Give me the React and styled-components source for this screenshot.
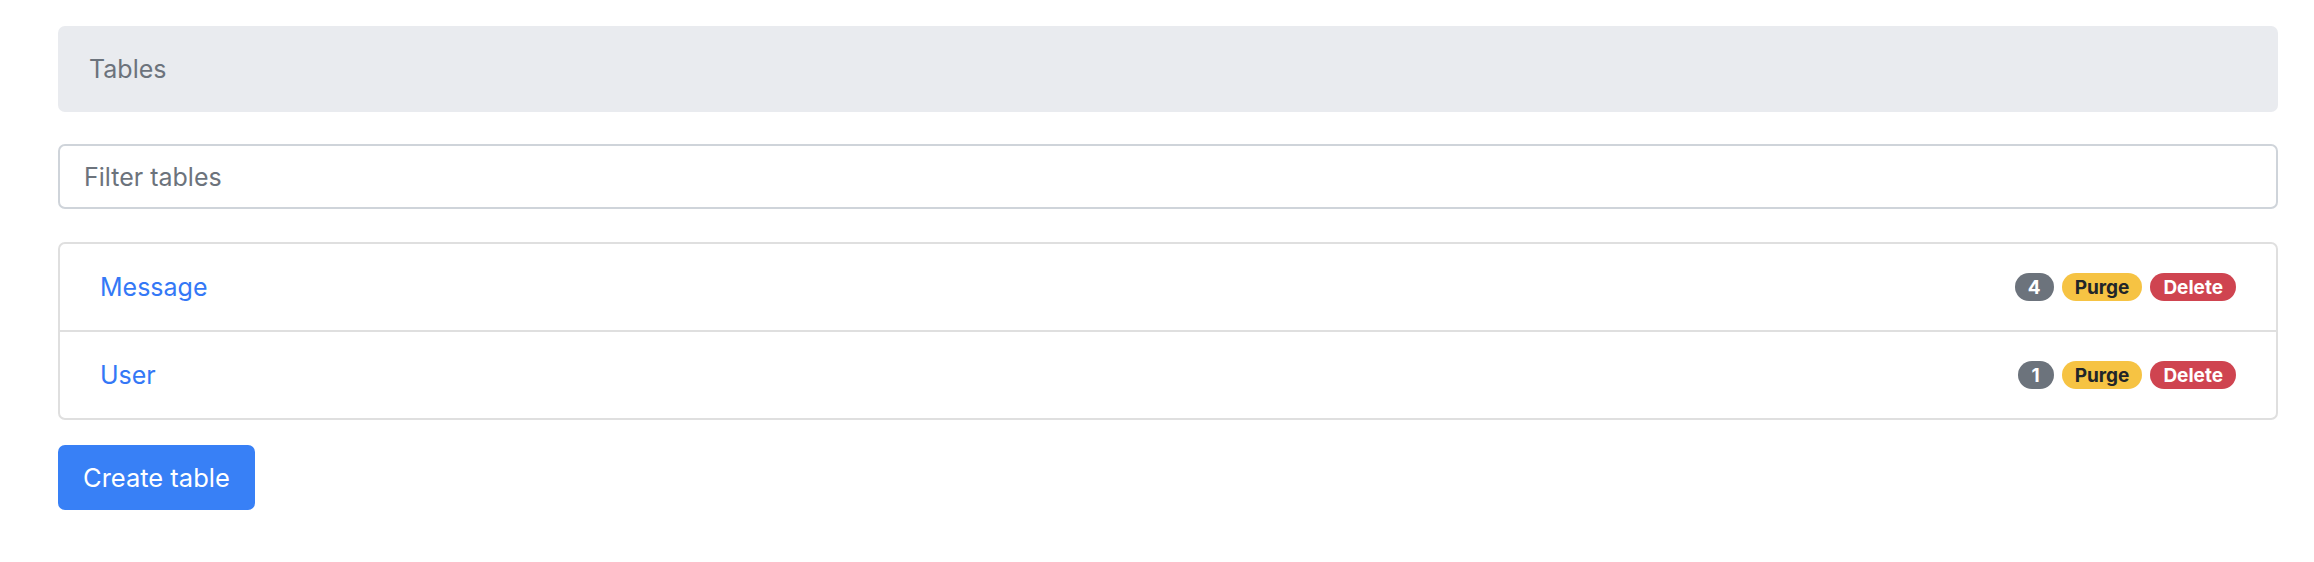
import { createGlobalStyle, styled } from "styled-components"

const GlobalStyle = createGlobalStyle`
    html, body {
        margin:0;
        background:#ffffff;
        font-family:Inter, "Noto Sans", "Liberation Sans", sans-serif;
    }
`

const tables = [
    { name: "Message", count: 4 },
    { name: "User", count: 1 },
]

function App(){
    return (
        <>
            <GlobalStyle />
            <Page>
                <Breadcrumb>Tables</Breadcrumb>
                <FilterInput placeholder="Filter tables" />
                <ListGroup>
                    {tables.map((table) => (
                        <ListItem key={table.name}>
                            <TableLink href="#">{table.name}</TableLink>
                            <Badges>
                                <Badge $variant="count">{table.count}</Badge>
                                <Badge $variant="purge">Purge</Badge>
                                <Badge $variant="delete">Delete</Badge>
                            </Badges>
                        </ListItem>
                    ))}
                </ListGroup>
                <PrimaryButton>Create table</PrimaryButton>
            </Page>
        </>
    )
}

export default App

const badgeColors = {
    count: { bg: "#6c737c", fg: "#ffffff" },
    purge: { bg: "#f6c343", fg: "#212529" },
    delete: { bg: "#cf4450", fg: "#ffffff" },
}

const Page = styled.div`
    padding:26px 36px 40px 58px;
    display:flex;
    flex-direction:column;
    align-items:flex-start;
`
const Breadcrumb = styled.div`
    box-sizing:border-box;
    width:100%;
    height:86px;
    display:flex;
    align-items:center;
    padding:0 31px;
    background:#e9ebef;
    border-radius:7px;
    color:#6c737c;
    font-size:25px;
`
const FilterInput = styled.input`
    box-sizing:border-box;
    width:100%;
    height:65px;
    margin-top:32px;
    padding:0 24px;
    border:2px solid #cfd4da;
    border-radius:7px;
    font-family:inherit;
    font-size:25px;
    color:#495057;
    outline:none;
    &::placeholder{
        color:#6c737c;
    }
`
const ListGroup = styled.div`
    box-sizing:border-box;
    width:100%;
    margin-top:33px;
    border:2px solid #dfdfdf;
    border-radius:7px;
`
const ListItem = styled.div`
    height:86px;
    display:flex;
    align-items:center;
    justify-content:space-between;
    padding:0 40px 0 40px;
    & + &{
        border-top:2px solid #dfdfdf;
    }
`
const TableLink = styled.a`
    color:#3478f6;
    text-decoration:none;
    font-size:25px;
`
const Badges = styled.div`
    display:flex;
    gap:8px;
`
const Badge = styled.span`
    display:inline-flex;
    align-items:center;
    justify-content:center;
    height:28px;
    min-width:36px;
    box-sizing:border-box;
    padding:0 13px;
    border-radius:14px;
    font-size:19px;
    font-weight:700;
    background:${props => badgeColors[props.$variant].bg};
    color:${props => badgeColors[props.$variant].fg};
`
const PrimaryButton = styled.button`
    margin-top:25px;
    height:65px;
    padding:0 25px;
    border:none;
    border-radius:7px;
    background:#3880f6;
    color:#ffffff;
    font-family:inherit;
    font-size:25.5px;
    cursor:pointer;
`
